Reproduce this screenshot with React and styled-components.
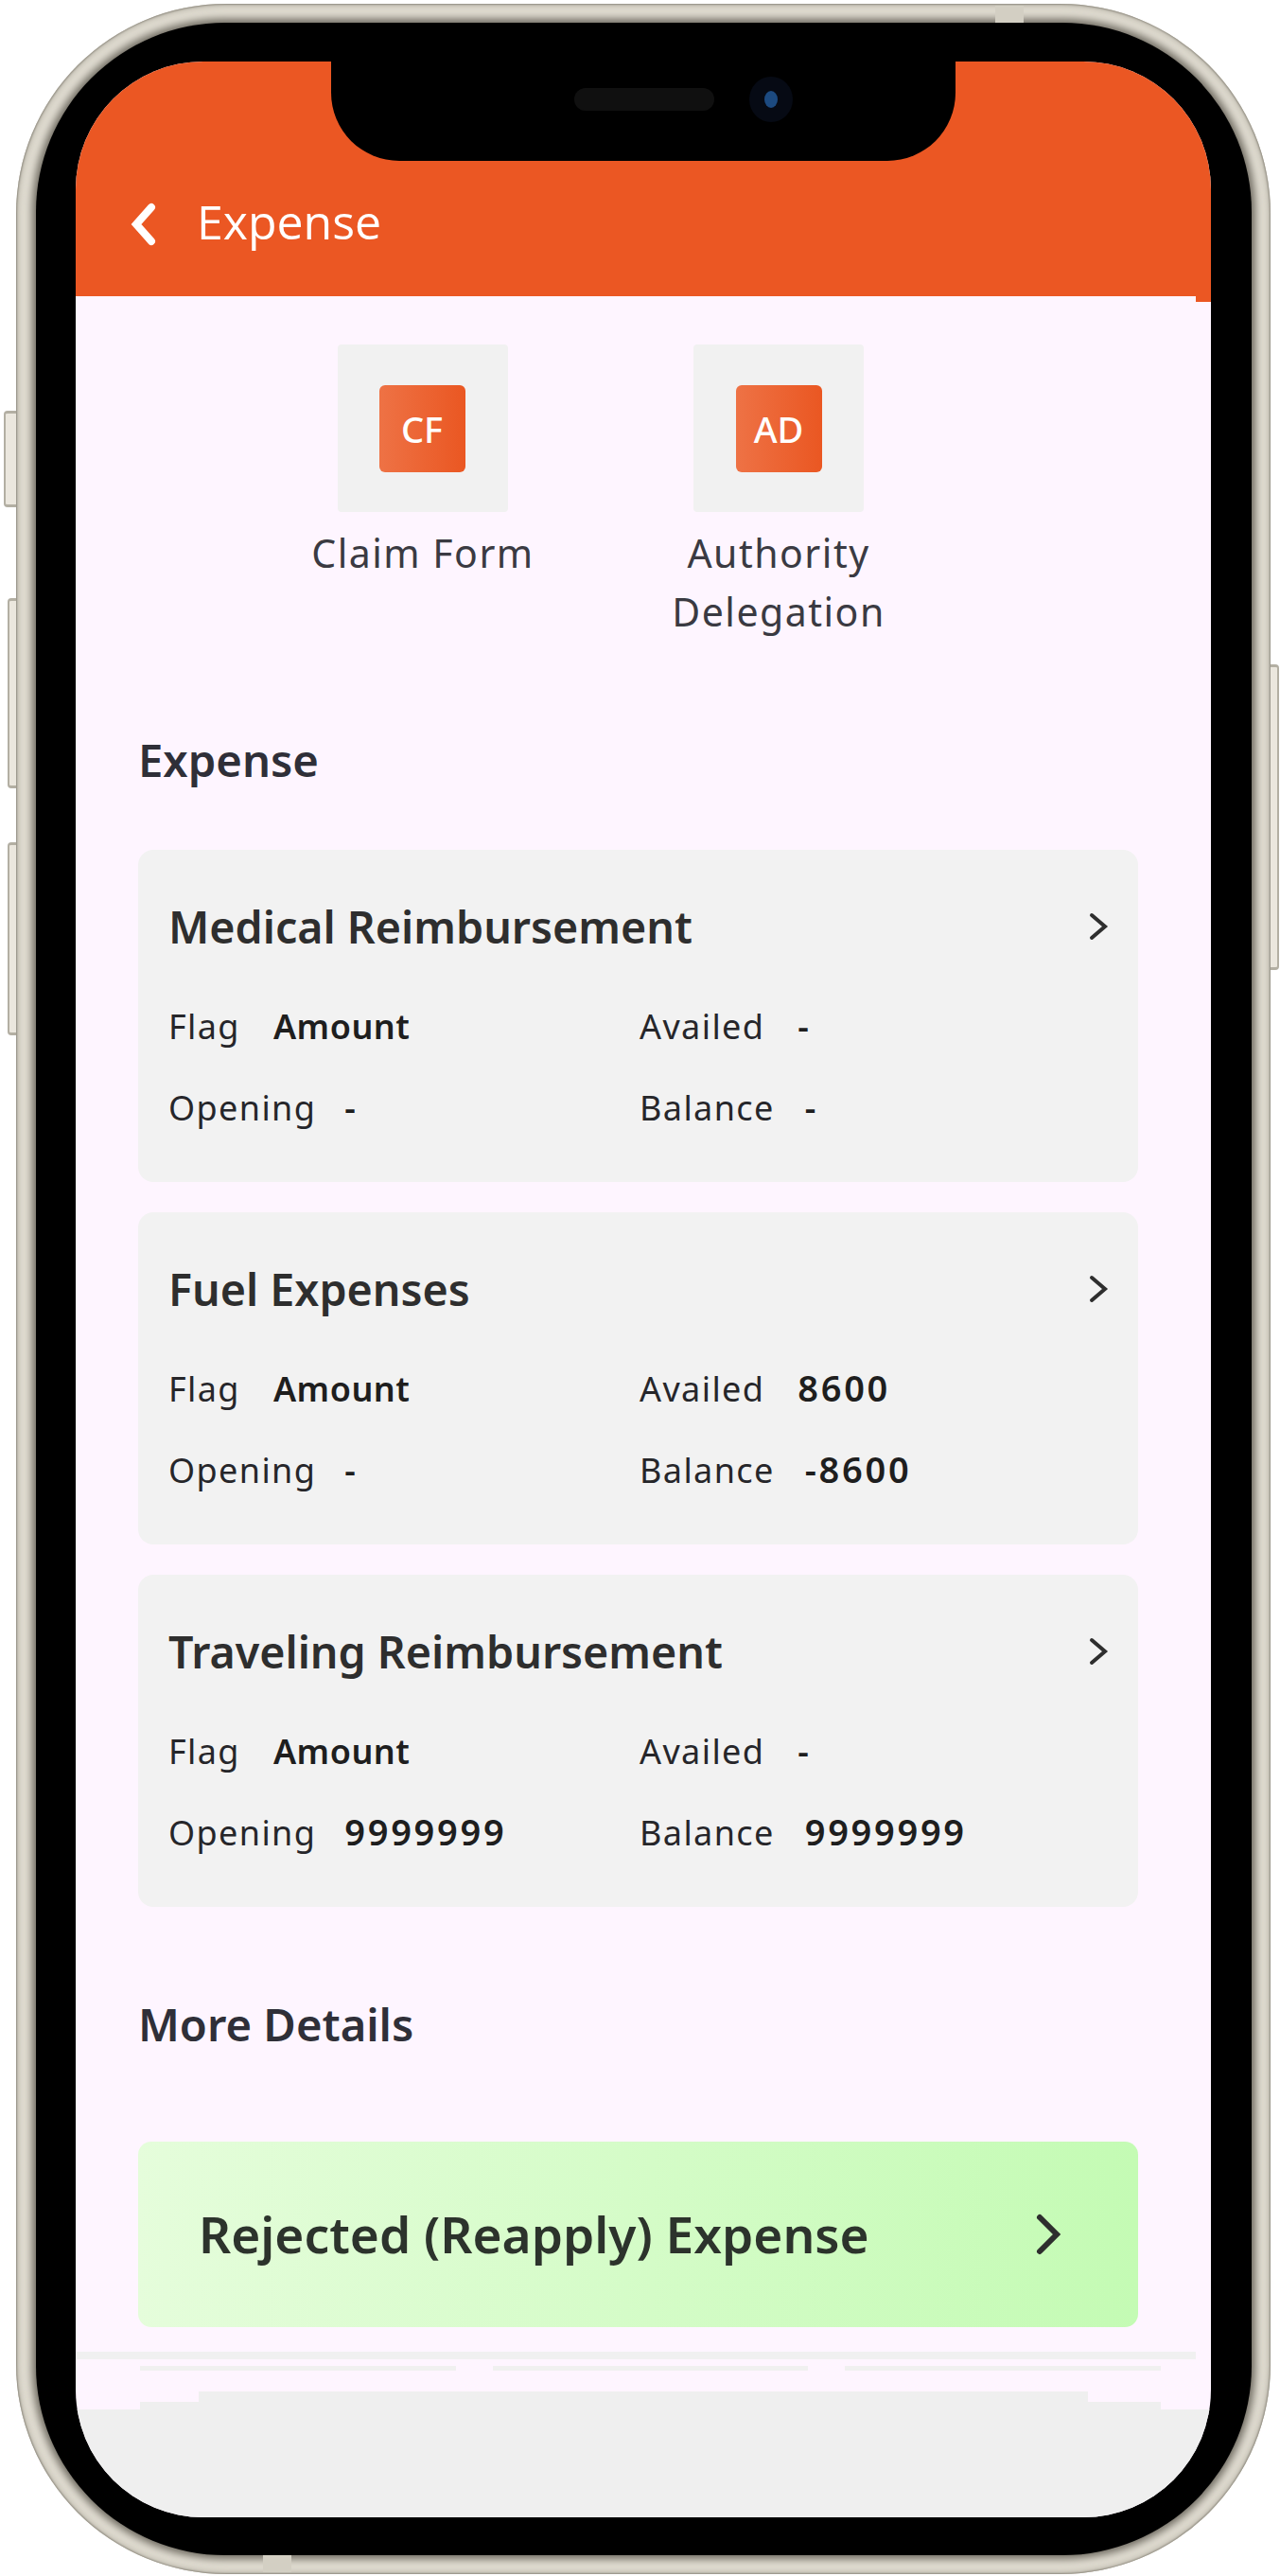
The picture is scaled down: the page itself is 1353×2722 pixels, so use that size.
import React from 'react';
import styled, { createGlobalStyle } from 'styled-components';

const GlobalStyle = createGlobalStyle`
  html, body {
    margin: 0;
    padding: 0;
    background: #ffffff;
    font-family: "Noto Sans", "Open Sans", sans-serif;
  }
  * { box-sizing: border-box; }
`;

const Page = styled.div`
  width: 1353px;
  height: 2722px;
  padding: 4px 10px 2px 17px;
  overflow: hidden;
`;

const Phone = styled.div`
  position: relative;
  width: 1326px;
  height: 2716px;
  padding: 20px 20px 20px 21px;
  border-radius: 222px;
  background: #e0dcd1;
  box-shadow: inset 0 0 2px 1px #8f8b80, inset 0 0 5px 4px #c9c5b9;
`;

const SideButton = styled.span`
  position: absolute;
  top: ${p => p.$top}px;
  height: ${p => p.$height}px;
  width: ${p => p.$width}px;
  ${p => (p.$right ? 'right: -9px;' : `left: -${p.$width}px;`)}
  background: #ebe7de;
  border: 2px solid #b3afa3;
  border-width: 3px ${p => (p.$right ? '2px' : '0')} 3px ${p => (p.$right ? '0' : '2px')};
  border-radius: ${p => (p.$right ? '0 4px 4px 0' : '4px 0 0 4px')};
`;

const Band = styled.span`
  position: absolute;
  left: ${p => p.$left}px;
  ${p => (p.$bottom ? 'bottom: 2px;' : 'top: 2px;')}
  width: 30px;
  height: 18px;
  background: #d3cfc3;
`;

const Bezel = styled.div`
  width: 100%;
  height: 100%;
  padding: 41px 43px 40px 42px;
  border-radius: 200px;
  background: #000000;
  box-shadow: 0 0 8px 4px #6e6a60;
`;

const Screen = styled.div`
  position: relative;
  display: flex;
  flex-direction: column;
  height: 100%;
  border-radius: 135px;
  overflow: hidden;
  background: #fef5ff;
`;

const Notch = styled.div`
  position: absolute;
  z-index: 2;
  top: 0;
  left: 270px;
  width: 660px;
  height: 105px;
  display: flex;
  align-items: center;
  padding: 0 0 25px 257px;
  gap: 37px;
  background: #000000;
  border-radius: 0 0 72px 72px;
`;

const Speaker = styled.div`
  width: 148px;
  height: 24px;
  border-radius: 12px;
  background: #101010;
`;

const Camera = styled.div`
  width: 46px;
  height: 48px;
  border-radius: 50%;
  display: flex;
  align-items: center;
  justify-content: center;
  background: #060a14;
  &::after {
    content: '';
    width: 14px;
    height: 18px;
    border-radius: 50%;
    background: #1c4a80;
  }
`;

const Header = styled.header`
  position: relative;
  flex: 0 0 248px;
  display: flex;
  align-items: flex-start;
  gap: 40px;
  padding: 146px 0 0 56px;
  background: #eb5723;
  &::after {
    content: '';
    position: absolute;
    right: 0;
    top: 100%;
    width: 16px;
    height: 6px;
    background: #eb5723;
  }
`;

const HeaderTitle = styled.h1`
  margin: -7px 0 0;
  font: 400 50px/60px "Open Sans", sans-serif;
  color: #ffffff;
`;

const ShortcutRow = styled.div`
  display: flex;
  gap: 116px;
  padding: 51px 0 0 237px;
`;

const Shortcut = styled.div`
  width: 260px;
  display: flex;
  flex-direction: column;
  align-items: center;
`;

const Tile = styled.div`
  width: 180px;
  height: 177px;
  display: flex;
  align-items: center;
  justify-content: center;
  background: #f1f1f1;
  border-radius: 4px;
`;

const TileIcon = styled.div`
  width: 91px;
  height: 92px;
  margin-right: ${p => p.$nudge || 0}px;
  display: flex;
  align-items: center;
  justify-content: center;
  border-radius: 6px;
  background: linear-gradient(90deg, #ee7245, #ea5722);
  color: #ffffff;
  font: 500 38px/1 "Noto Sans", sans-serif;
`;

const ShortcutLabel = styled.div`
  margin-top: 12px;
  text-align: center;
  font: 400 41px/62px "Noto Sans", sans-serif;
  letter-spacing: 1.5px;
  color: #3a3a42;
`;

const SectionTitle = styled.h2`
  margin: ${p => p.$top}px 0 0 66px;
  font: 600 47.2px/60px "Noto Sans", sans-serif;
  color: #2f2f38;
`;

const CardList = styled.div`
  display: flex;
  flex-direction: column;
  gap: 32px;
  margin: 65px 77px 0 66px;
`;

const Card = styled.div`
  height: 351px;
  padding: 51px 31px 51px 32px;
  border-radius: 16px;
  background: #f2f2f2;
`;

const CardHead = styled.div`
  display: flex;
  align-items: center;
  justify-content: space-between;
  height: 60px;
`;

const CardTitle = styled.div`
  font: 600 46.6px/60px "Noto Sans", sans-serif;
  color: #2e2e2e;
`;

const Stats = styled.div`
  display: grid;
  grid-template-columns: 498px 1fr;
  row-gap: 36px;
  margin-top: 51px;
`;

const Stat = styled.div`
  display: flex;
  align-items: baseline;
  gap: ${p => p.$gap}px;
  height: 50px;
  font: 400 36px/50px "Noto Sans", sans-serif;
  letter-spacing: 1.4px;
  color: #26262a;
`;

const StatValue = styled.span`
  font-weight: 600;
  font-size: ${p => (p.$digits ? '38px' : '36px')};
  line-height: 1;
  color: #1e1e1e;
  letter-spacing: ${p => (p.$digits ? '2.7px' : '0.5px')};
`;

const RejectedCard = styled.div`
  display: flex;
  align-items: center;
  justify-content: space-between;
  height: 196px;
  margin: 94px 77px 0 66px;
  padding: 0 80px 0 64px;
  border-radius: 14px;
  background: linear-gradient(90deg, #e5fddb, #c4fbb4);
  color: #2c332c;
  font: 600 53.2px/66px "Noto Sans", sans-serif;
`;

const Divider = styled.div`
  flex: 0 0 8px;
  margin: 26px 16px 0 0;
  background: #f0f0f0;
`;

const TabTops = styled.div`
  flex: 0 0 5px;
  display: flex;
  gap: 39px;
  margin: 7px 53px 0 68px;
`;

const TabTop = styled.div`
  flex: 1;
  background: #f0f0f0;
`;

const NavCap = styled.div`
  flex: 0 0 11px;
  width: 940px;
  margin: 22px 0 0 130px;
  background: #efefef;
`;

const NavShoulder = styled.div`
  flex: 0 0 8px;
  margin: 0 53px 0 68px;
  background: #efefef;
`;

const NavBase = styled.div`
  flex: 1;
  background: #efefef;
`;

const Chevron = ({ width, height, weight = 4, back, color = '#2e2e2e' }) => (
  <svg width={width} height={height} viewBox={`0 0 ${width} ${height}`} fill="none">
    <polyline
      points={
        back
          ? `${width - weight},${weight} ${weight},${height / 2} ${width - weight},${height - weight}`
          : `${weight},${weight} ${width - weight},${height / 2} ${weight},${height - weight}`
      }
      stroke={color}
      strokeWidth={weight}
      strokeLinecap="round"
      strokeLinejoin="miter"
    />
  </svg>
);

const isDigits = value => value.length > 1;

const expenses = [
  { title: 'Medical Reimbursement', availed: '-', opening: '-', balance: '-' },
  { title: 'Fuel Expenses', availed: '8600', opening: '-', balance: '-8600' },
  { title: 'Traveling Reimbursement', availed: '-', opening: '9999999', balance: '9999999' },
];

export default function App() {
  return (
    <Page>
      <GlobalStyle />
      <Phone>
        <SideButton $top={430} $height={102} $width={13} />
        <SideButton $top={628} $height={201} $width={9} />
        <SideButton $top={886} $height={204} $width={9} />
        <SideButton $right $top={698} $height={323} $width={9} />
        <Band $left={1035} />
        <Band $left={261} $bottom />
        <Bezel>
          <Screen>
            <Notch>
              <Speaker />
              <Camera />
            </Notch>
            <Header>
              <Chevron back width={32} height={52} weight={8} color="#ffffff" />
              <HeaderTitle>Expense</HeaderTitle>
            </Header>
            <ShortcutRow>
              <Shortcut>
                <Tile><TileIcon $nudge={2}>CF</TileIcon></Tile>
                <ShortcutLabel>Claim Form</ShortcutLabel>
              </Shortcut>
              <Shortcut>
                <Tile><TileIcon>AD</TileIcon></Tile>
                <ShortcutLabel>Authority Delegation</ShortcutLabel>
              </Shortcut>
            </ShortcutRow>
            <SectionTitle $top={96}>Expense</SectionTitle>
            <CardList>
              {expenses.map(item => (
                <Card key={item.title}>
                  <CardHead>
                    <CardTitle>{item.title}</CardTitle>
                    <Chevron width={22} height={32} />
                  </CardHead>
                  <Stats>
                    <Stat $gap={35}>Flag<StatValue>Amount</StatValue></Stat>
                    <Stat $gap={35}>Availed<StatValue $digits={isDigits(item.availed)}>{item.availed}</StatValue></Stat>
                    <Stat $gap={30}>Opening<StatValue $digits={isDigits(item.opening)}>{item.opening}</StatValue></Stat>
                    <Stat $gap={32}>Balance<StatValue $digits={isDigits(item.balance)}>{item.balance}</StatValue></Stat>
                  </Stats>
                </Card>
              ))}
            </CardList>
            <SectionTitle $top={94}>More Details</SectionTitle>
            <RejectedCard>
              Rejected (Reapply) Expense
              <Chevron width={30} height={48} weight={6} />
            </RejectedCard>
            <Divider />
            <TabTops>
              <TabTop />
              <TabTop />
              <TabTop />
            </TabTops>
            <NavCap />
            <NavShoulder />
            <NavBase />
          </Screen>
        </Bezel>
      </Phone>
    </Page>
  );
}
